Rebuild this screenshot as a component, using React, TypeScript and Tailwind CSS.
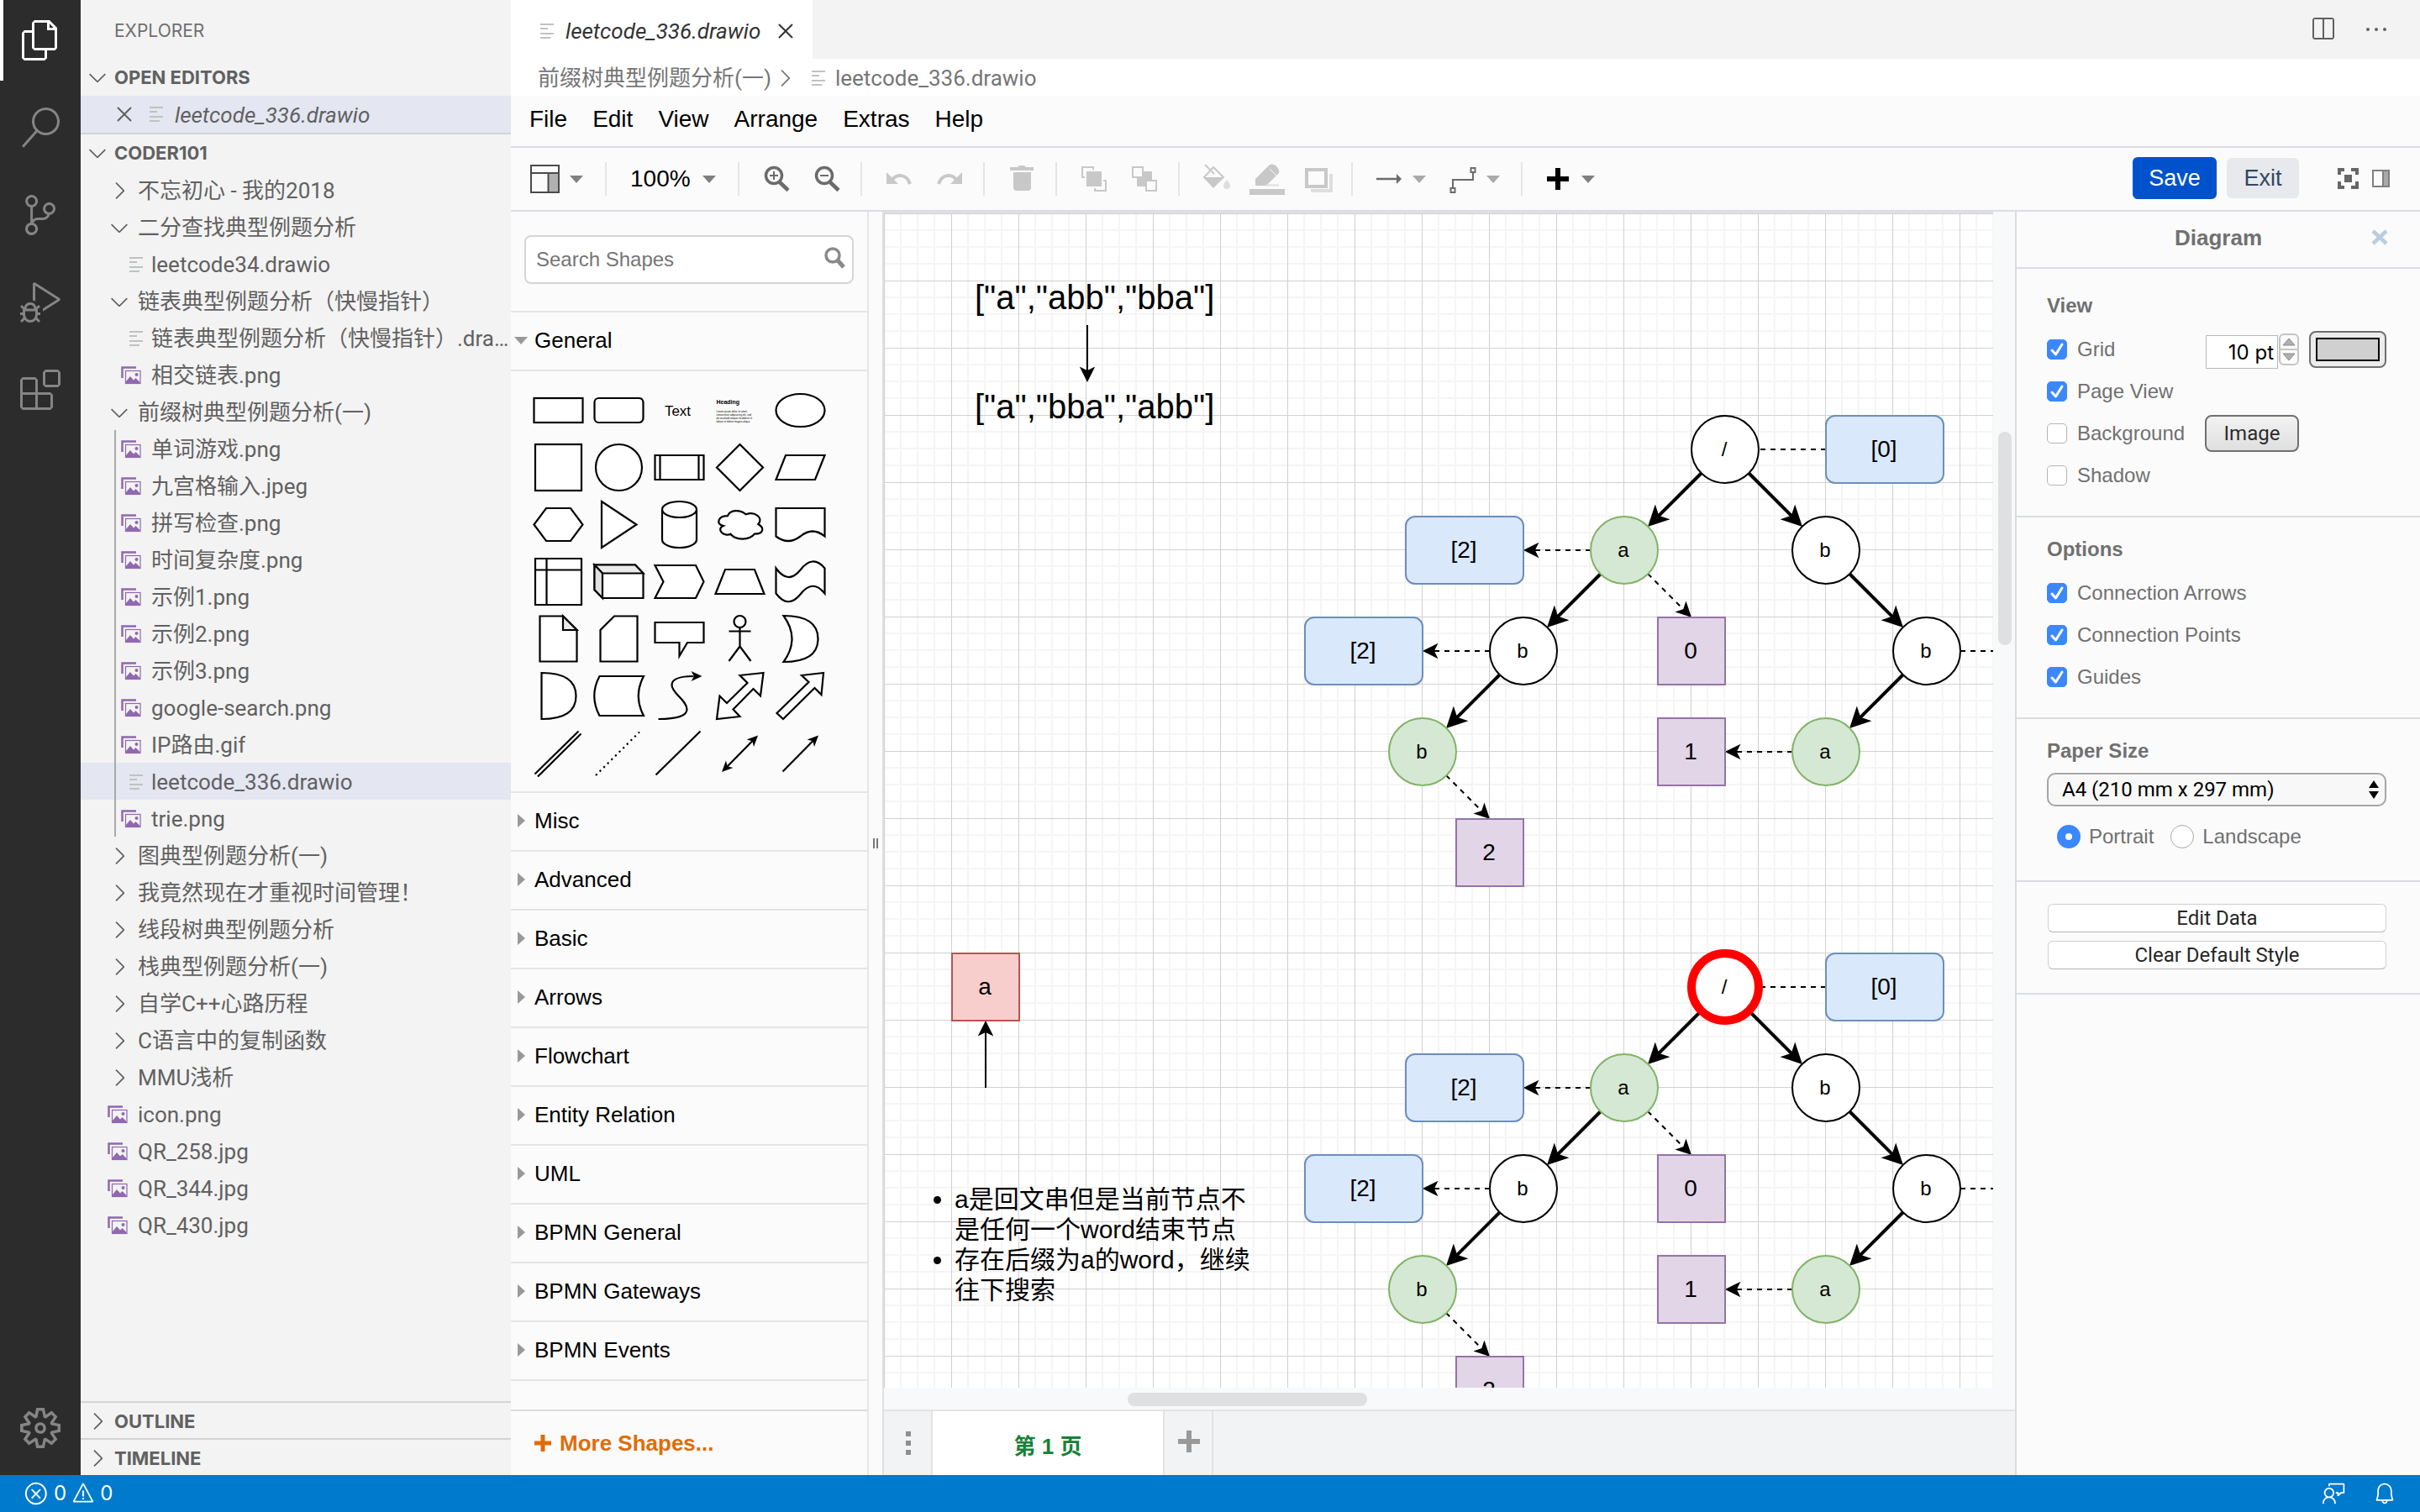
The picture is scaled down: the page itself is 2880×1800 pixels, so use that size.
import React from "react";
import {
  VscFiles,
  VscSearch,
  VscSourceControl,
  VscDebugAlt,
  VscExtensions,
  VscSettingsGear,
  VscSplitHorizontal,
  VscEllipsis,
  VscChevronRight,
  VscChevronDown,
  VscClose,
  VscError,
  VscWarning,
  VscBell,
  VscFeedback,
} from "react-icons/vsc";

const UI = "font-['Inter','Noto_Sans_CJK_SC',sans-serif]";
const NARROW = "font-['Roboto','Noto_Sans_CJK_SC',sans-serif]";
const HELV = "font-['Liberation_Sans','Noto_Sans_CJK_SC',sans-serif]";

/* ---------- small glyphs ---------- */

function LinesIcon() {
  return (
    <svg className="h-6 w-5 shrink-0" viewBox="0 0 20 24" fill="none" stroke="#bfc2c1" strokeWidth="2">
      <path d="M2 4h16M2 9h9M2 15h16M2 20h12" />
    </svg>
  );
}

function ImageFileIcon() {
  return (
    <svg className="h-6 w-6 shrink-0" viewBox="0 0 24 24" fill="none" stroke="#9068b0">
      <path d="M1.500 15V2.500H18" strokeWidth="2.500" />
      <rect x="5.500" y="6.500" width="17.500" height="15" strokeWidth="1.200" />
      <path d="M6 21v-2l5-6 4 4.500 2.500-2.500 5 5v1z" fill="#9068b0" stroke="none" />
      <circle cx="18.500" cy="11" r="2" fill="#9068b0" stroke="none" />
    </svg>
  );
}

function Caret({ tone = "#808080" }: { tone?: string }) {
  return (
    <svg className="h-4 w-5 shrink-0" viewBox="0 0 20 16">
      <path d="M2 4h16l-8 9z" fill={tone} />
    </svg>
  );
}

/* ---------- activity bar ---------- */

function ActivityBar() {
  const items = [
    { label: "Explorer", Icon: VscFiles, active: true },
    { label: "Search", Icon: VscSearch },
    { label: "Source Control", Icon: VscSourceControl },
    { label: "Run", Icon: VscDebugAlt },
    { label: "Extensions", Icon: VscExtensions },
  ];
  return (
    <nav className="flex w-24 shrink-0 flex-col justify-between bg-[#2c2c2c] text-[#858585]">
      <div className="flex flex-col gap-2">
        {items.map(({ label, Icon, active }) => (
          <button
            key={label}
            aria-label={label}
            className={
              active
                ? "flex h-24 items-center justify-center border-l-4 border-white pr-1 text-white"
                : "flex h-24 items-center justify-center"
            }
          >
            <Icon size={48} />
          </button>
        ))}
      </div>
      <button aria-label="Manage" className="mb-2 flex h-24 items-center justify-center">
        <VscSettingsGear size={48} />
      </button>
    </nav>
  );
}

/* ---------- explorer ---------- */

type Entry = { name: string; kind: "closed" | "open" | "img" | "doc"; sub?: boolean; guide?: boolean; selected?: boolean };

const entries: Entry[] = [
  { name: "不忘初心 - 我的2018", kind: "closed" },
  { name: "二分查找典型例题分析", kind: "open" },
  { name: "leetcode34.drawio", kind: "doc", sub: true },
  { name: "链表典型例题分析（快慢指针）", kind: "open" },
  { name: "链表典型例题分析（快慢指针）.drawio", kind: "doc", sub: true },
  { name: "相交链表.png", kind: "img", sub: true },
  { name: "前缀树典型例题分析(一)", kind: "open" },
  { name: "单词游戏.png", kind: "img", sub: true, guide: true },
  { name: "九宫格输入.jpeg", kind: "img", sub: true, guide: true },
  { name: "拼写检查.png", kind: "img", sub: true, guide: true },
  { name: "时间复杂度.png", kind: "img", sub: true, guide: true },
  { name: "示例1.png", kind: "img", sub: true, guide: true },
  { name: "示例2.png", kind: "img", sub: true, guide: true },
  { name: "示例3.png", kind: "img", sub: true, guide: true },
  { name: "google-search.png", kind: "img", sub: true, guide: true },
  { name: "IP路由.gif", kind: "img", sub: true, guide: true },
  { name: "leetcode_336.drawio", kind: "doc", sub: true, guide: true, selected: true },
  { name: "trie.png", kind: "img", sub: true, guide: true },
  { name: "图典型例题分析(一)", kind: "closed" },
  { name: "我竟然现在才重视时间管理！", kind: "closed" },
  { name: "线段树典型例题分析", kind: "closed" },
  { name: "栈典型例题分析(一)", kind: "closed" },
  { name: "自学C++心路历程", kind: "closed" },
  { name: "C语言中的复制函数", kind: "closed" },
  { name: "MMU浅析", kind: "closed" },
  { name: "icon.png", kind: "img" },
  { name: "QR_258.jpg", kind: "img" },
  { name: "QR_344.jpg", kind: "img" },
  { name: "QR_430.jpg", kind: "img" },
];

function TreeRow({ e }: { e: Entry }) {
  return (
    <li className={e.selected ? "flex h-11 items-center bg-[#e4e6f1]" : "flex h-11 items-center"}>
      <span className={e.guide ? "ml-10 h-full w-0.5 shrink-0 bg-[#a9a9a9]" : "ml-10 h-full w-0.5 shrink-0"} />
      {e.sub ? (
        <span className="flex w-[42px] shrink-0 items-center pl-1.5 pt-0.5">
          {e.kind === "img" ? <ImageFileIcon /> : <span className="ml-2 flex"><LinesIcon /></span>}
        </span>
      ) : e.kind === "img" ? (
        <span className="-ml-3 flex w-[38px] shrink-0 items-center pl-0.5 pt-0.5"><ImageFileIcon /></span>
      ) : (
        <span className="-ml-3 flex w-[38px] shrink-0 items-center pt-0.5">
          {e.kind === "open" ? <VscChevronDown size={32} /> : <VscChevronRight size={32} />}
        </span>
      )}
      <span className="truncate pt-0.5">{e.name}</span>
    </li>
  );
}

function SectionHeader({ title, open }: { title: string; open?: boolean }) {
  return (
    <button className={"flex h-11 w-full items-center gap-1 pl-1 text-left text-[22px] font-bold " + UI}>
      {open ? <VscChevronDown size={32} /> : <VscChevronRight size={32} />}
      {title}
    </button>
  );
}

function Explorer() {
  return (
    <aside className={"flex w-[512px] shrink-0 flex-col bg-[#f3f3f3] text-[26px] text-[#616161] " + NARROW}>
      <h2 className={"flex h-[70px] items-center pl-10 pt-1 text-[21px] text-[#6f6f6f] " + UI}>EXPLORER</h2>
      <SectionHeader title="OPEN EDITORS" open />
      <div className="flex h-11 items-center bg-[#e4e6f1] pl-9">
        <button aria-label="Close editor" className="mr-4 flex">
          <VscClose size={32} />
        </button>
        <span className="-ml-1 mr-3 flex"><LinesIcon /></span>
        <span className="pt-0.5 italic">leetcode_336.drawio</span>
      </div>
      <div className="h-0.5 bg-[#d4d4d4]" />
      <SectionHeader title="CODER101" open />
      <ul className="min-h-0 flex-1 overflow-hidden">
        {entries.map((e) => (
          <TreeRow key={e.name} e={e} />
        ))}
      </ul>
      <div className="h-11 border-t-2 border-[#d4d4d4]">
        <SectionHeader title="OUTLINE" />
      </div>
      <div className="h-11 border-t-2 border-[#d4d4d4]">
        <SectionHeader title="TIMELINE" />
      </div>
    </aside>
  );
}

/* ---------- tabs and breadcrumbs ---------- */

function TabBar() {
  return (
    <div className={"flex h-[70px] shrink-0 justify-between bg-[#f3f3f3] text-[26px] text-[#333333] " + NARROW}>
      <div className="flex items-center bg-white pl-[33px] pr-4 pt-1">
        <LinesIcon />
        <span className="ml-3 mr-3.5 italic">leetcode_336.drawio</span>
        <button aria-label="Close tab" className="flex">
          <VscClose size={32} />
        </button>
      </div>
      <div className="flex items-center gap-8 pr-9 text-[#616161]">
        <button aria-label="Split editor"><VscSplitHorizontal size={32} /></button>
        <button aria-label="More actions"><VscEllipsis size={32} /></button>
      </div>
    </div>
  );
}

function Breadcrumbs() {
  return (
    <div className={"flex h-11 shrink-0 items-center bg-white pl-8 pt-0.5 text-[26px] text-[#767676] " + NARROW}>
      <span>前缀树典型例题分析(一)</span>
      <VscChevronRight size={32} />
      <span className="ml-3.5 flex"><LinesIcon /></span>
      <span className="ml-2.5">leetcode_336.drawio</span>
    </div>
  );
}

/* ---------- menu and toolbar ---------- */

function MenuBar() {
  return (
    <div className="flex h-[62px] shrink-0 items-center gap-[30px] border-b-2 border-[#dadce0] bg-[#fbfbfb] pb-1 pl-[22px] text-[28px] text-black">
      {["File", "Edit", "View", "Arrange", "Extras", "Help"].map((m) => (
        <button key={m}>{m}</button>
      ))}
    </div>
  );
}

function Sep() {
  return <span className="h-10 w-0.5 shrink-0 bg-[#e5e5e5]" />;
}

function Tool({ label, children, tone }: { label: string; children: React.ReactNode; tone?: string }) {
  return (
    <button aria-label={label} className="flex w-[60px] items-center justify-center" style={{ color: tone ?? "#c8c8c8" }}>
      <svg className="h-12 w-12" viewBox="-24 -24 48 48" fill="none" stroke="currentColor">
        {children}
      </svg>
    </button>
  );
}

function Toolbar() {
  return (
    <div className="flex h-[76px] shrink-0 items-center border-b-2 border-[#dadce0] bg-[#fbfbfb] text-[28px]">
      <button aria-label="View" className="flex w-28 items-center gap-2.5 pl-[22px]">
        <svg className="h-10 w-9" viewBox="0 0 36 40" fill="none" stroke="#4a4a4a" strokeWidth="2">
          <rect x="2" y="4" width="33" height="32" fill="#fbfbfb" />
          <rect x="23" y="13" width="11" height="22" fill="#b0b0b0" stroke="none" />
          <path d="M2 13h33M22.500 13v23" />
        </svg>
        <Caret />
      </button>
      <Sep />
      <button className="flex w-36 items-center gap-3 pl-7">
        100%
        <Caret />
      </button>
      <span className="w-3" />
      <Sep />
      <div className="flex pl-3.5 pr-2.5">
        <Tool label="Zoom in" tone="#6b6b6b">
          <circle cx="-3" cy="-4" r="9.500" strokeWidth="3.500" />
          <path d="M4 4l10 9.500" strokeWidth="4.500" />
          <path d="M-8-4h10M-3-9v10" strokeWidth="2" />
        </Tool>
        <Tool label="Zoom out" tone="#6b6b6b">
          <circle cx="-3" cy="-4" r="9.500" strokeWidth="3.500" />
          <path d="M4 4l10 9.500" strokeWidth="4.500" />
          <path d="M-8-4h10" strokeWidth="2" />
        </Tool>
      </div>
      <Sep />
      <div className="flex pl-3.5 pr-2.5">
        <Tool label="Undo">
          <path d="M-9 2C-3-7 9-6 13 6" strokeWidth="4" />
          <path d="M-15-8v14h14z" fill="currentColor" stroke="none" />
        </Tool>
        <Tool label="Redo">
          <path d="M9 2C3-7-9-6-13 6" strokeWidth="4" />
          <path d="M15-8v14h-14z" fill="currentColor" stroke="none" />
        </Tool>
      </div>
      <Sep />
      <div className="flex pl-3.5 pr-2.5">
        <Tool label="Delete">
          <path d="M-14-14h9l2-2h6l2 2h9v4h-28zM-10-8h21v18q0 4-4 4h-13q-4 0-4-4z" fill="currentColor" stroke="none" />
        </Tool>
      </div>
      <Sep />
      <div className="flex pl-3.5 pr-2.5">
        <Tool label="To front">
          <rect x="-9" y="-9" width="18" height="18" fill="currentColor" stroke="none" />
          <path d="M-11-2h-3v-12h13v3M11 2h3v12h-13v-3" strokeWidth="2" />
        </Tool>
        <Tool label="To back">
          <rect x="-9" y="-9" width="18" height="18" fill="currentColor" stroke="none" />
          <rect x="-14" y="-14" width="12" height="12" fill="#fbfbfb" strokeWidth="2" />
          <rect x="2" y="2" width="12" height="12" fill="#fbfbfb" strokeWidth="2" />
        </Tool>
      </div>
      <Sep />
      <div className="flex pl-3.5 pr-2.5">
        <Tool label="Fill color">
          <path d="M-14-17L-3-6" strokeWidth="2" />
          <path d="M-4-14L8-2L-4 9L-15-2Z" strokeWidth="2" />
          <path d="M-15-2H8L-4 11Z" fill="currentColor" stroke="none" />
          <path d="M12 1q4 5 4 7a4 4 0 0 1-8 0q0-2 4-7z" fill="#dedede" stroke="none" />
        </Tool>
        <Tool label="Line color">
          <path d="M-14 8v-8l17-17q5-2 9 3t1 8l-14 14z" fill="currentColor" stroke="none" />
          <path d="M3-12l8 8" stroke="#fbfbfb" strokeWidth="1" />
          <path d="M-2 7.500h16" stroke="#dedede" strokeWidth="2" />
          <path d="M-21 15.500h42" strokeWidth="7" />
        </Tool>
        <Tool label="Shadow">
          <path d="M-8 14h24v-20" stroke="#dedede" strokeWidth="4" />
          <rect x="-13" y="-11" width="23" height="20" strokeWidth="4" />
        </Tool>
      </div>
      <Sep />
      <div className="flex px-3">
        <button aria-label="Connection" className="flex w-[88px] items-center justify-center gap-2.5 pl-1">
          <svg className="h-10 w-8" viewBox="0 0 32 40">
            <path d="M1 20h26" stroke="#6b6b6b" strokeWidth="2.500" />
            <path d="M25 14l6 6-6 6z" fill="#6b6b6b" />
          </svg>
          <Caret tone="#a9a9a9" />
        </button>
        <button aria-label="Waypoints" className="flex w-[88px] items-center justify-center gap-2.5 pl-1">
          <svg className="h-10 w-8" viewBox="0 0 32 40" fill="none" stroke="#6b6b6b" strokeWidth="2">
            <path d="M4 31V21H28V12" />
            <rect x="1.500" y="31" width="5" height="5" />
            <rect x="25.500" y="7" width="5" height="5" />
          </svg>
          <Caret tone="#a9a9a9" />
        </button>
      </div>
      <Sep />
      <button aria-label="Insert" className="flex w-28 items-center gap-3 pl-7">
        <svg className="h-7 w-7" viewBox="0 0 28 28">
          <path d="M14 1v26M1 14h26" stroke="#000" strokeWidth="6" />
        </svg>
        <Caret />
      </button>
      <div className="ml-auto flex items-center pb-0.5 pr-[34px]">
        <button className="mr-3 h-[50px] w-[100px] rounded-md bg-[#0052cc] text-[27px] text-white">Save</button>
        <button className="mr-11 h-12 w-[86px] rounded-md bg-[#e7e9ed] text-[27px] text-[#344563]">Exit</button>
        <button aria-label="Fullscreen" className="mr-3.5">
          <svg className="h-7 w-7" viewBox="0 0 28 28" fill="none" stroke="#666" strokeWidth="4">
            <path d="M4 10V4H10M18 4H25V10M25 18V25H18M10 25H4V18" />
            <rect x="10" y="10" width="9" height="9" fill="#666" stroke="none" />
          </svg>
        </button>
        <button aria-label="Format panel">
          <svg className="h-6 w-6" viewBox="0 0 24 24" fill="none" stroke="#808080" strokeWidth="2">
            <rect x="2" y="3" width="19" height="19" fill="#fbfbfb" />
            <rect x="14" y="3" width="7" height="19" fill="#a9a9a9" />
          </svg>
        </button>
      </div>
    </div>
  );
}

/* ---------- shapes sidebar ---------- */

const head = (x: number, y: number, a: number) => (
  <path d="M0 0L-13 6L-9.500 0L-13-6Z" fill="#000" stroke="none" transform={`translate(${x} ${y}) rotate(${a})`} />
);

const shapes: { label: string; art: React.ReactNode }[] = [
  { label: "Rectangle", art: <rect x="-29" y="-14.500" width="58" height="29" /> },
  { label: "Rounded Rectangle", art: <rect x="-29" y="-14.500" width="58" height="29" rx="5" /> },
  {
    label: "Text",
    art: (
      <text x="-2" y="6" textAnchor="middle" fontSize="17" fill="#000" stroke="none">
        Text
      </text>
    ),
  },
  {
    label: "Textbox",
    art: (
      <g fill="#000" stroke="none" fontSize="3">
        <text x="-28" y="-8" fontSize="7" fontWeight="bold">Heading</text>
        <text x="-28" y="2">Lorem ipsum dolor sit amet,</text>
        <text x="-28" y="6">consectetur adipisicing elit, sed</text>
        <text x="-28" y="10">do eiusmod tempor incididunt ut</text>
        <text x="-28" y="14">labore et dolore magna aliqua.</text>
      </g>
    ),
  },
  { label: "Ellipse", art: <ellipse rx="29" ry="19.500" /> },
  { label: "Square", art: <rect x="-27.500" y="-27.500" width="55" height="55" /> },
  { label: "Circle", art: <circle r="27.500" /> },
  { label: "Process", art: <path d="M-29-14.500h58v29h-58zM-23-14.500v29M23-14.500v29" /> },
  { label: "Diamond", art: <path d="M0-27.500L27.500 0L0 27.500L-27.500 0Z" /> },
  { label: "Parallelogram", art: <path d="M-17.500-14.500H29L17.500 14.500H-29Z" /> },
  { label: "Hexagon", art: <path d="M-14.500-19.500H14.500L29 0L14.500 19.500H-14.500L-29 0Z" /> },
  { label: "Triangle", art: <path d="M-20.500-27.500L21 0L-20.500 27.500Z" /> },
  {
    label: "Cylinder",
    art: <path d="M-20.500-18A20.500 9.500 0 0 1 20.500-18V18A20.500 9.500 0 0 1-20.500 18ZM-20.500-18A20.500 9.500 0 0 0 20.500-18" />,
  },
  {
    label: "Cloud",
    art: (
      <path
        transform="translate(-29 -20)"
        d="M14.500 9.700C2.900 9.700 0 19.500 9.300 21.500C0 25.700 10.400 35.100 18 31.200C23.200 39 40.600 39 46.400 31.200C58 31.200 58 23.400 50.800 19.500C58 11.700 46.400 3.900 36.300 7.800C29 2 17.400 2 14.500 9.700Z"
      />
    ),
  },
  { label: "Document", art: <path d="M-29-19.500H29V14Q14.500 2 0 14Q-14.500 25-29 14Z" /> },
  { label: "Internal Storage", art: <path d="M-27.500-27.500h55v55h-55zM-14-27.500v55M-27.500-14h55" /> },
  {
    label: "Cube",
    art: (
      <>
        <path d="M-29-20H19.500L29-10V19.500H-19.500L-29 9.500Z" />
        <path d="M-29-20H19.500L29-10H-19.500Z" fill="#ebebeb" />
        <path d="M-29-20L-19.500-10V19.500L-29 9.500Z" fill="#e0e0e0" />
      </>
    ),
  },
  { label: "Step", art: <path d="M-29-19.500H19.500L29 0L19.500 19.500H-29L-19 0Z" /> },
  { label: "Trapezoid", art: <path d="M-17.500-14.500H17.500L29 14.500H-29Z" /> },
  { label: "Tape", art: <path d="M-29-16Q-14.500 4 0-14Q14.500-33 29-16V14Q14.500-4 0 15Q-14.500 33-29 14Z" /> },
  {
    label: "Note",
    art: (
      <>
        <path d="M-22-27H5.500L22-10.500V27H-22Z" />
        <path d="M5.500-27V-10.500H22Z" fill="#e8e8e8" />
      </>
    ),
  },
  { label: "Card", art: <path d="M-5.500-27H22V27H-22V-10.500Z" /> },
  { label: "Callout", art: <path d="M-29-19.500H29V4.500H9.500L0 20.500V4.500H-29Z" /> },
  {
    label: "Actor",
    art: (
      <>
        <circle cy="-20.500" r="7" />
        <path d="M0-13.500V9M-13-9H13M0 9L-13 26.500M0 9L13 26.500" fill="none" />
      </>
    ),
  },
  { label: "Or", art: <path d="M-20-27.500Q21-27.500 21 0Q21 27.500-20 27.500Q0 0-20-27.500Z" /> },
  { label: "And", art: <path d="M-20-27.500Q21-27.500 21 0Q21 27.500-20 27.500Z" /> },
  { label: "Data Storage", art: <path d="M-23-23.500H29.500Q17 0 29.500 23.500H-23Q-35.500 0-23-23.500Z" /> },
  {
    label: "Curve",
    art: (
      <>
        <path d="M-25 27.500Q9 27.500 9 16C9 5-9-3-9-13Q-9-23.500 17-23.500" fill="none" />
        {head(27, -23.5, 0)}
      </>
    ),
  },
  {
    label: "Bidirectional Arrow",
    art: <path d="M28-27.500L0-24.500L9-15.500L-15.500 8.500L-24 0L-27.500 27.500L0 24.500L-8 16L16-8.500L24.500 0Z" />,
  },
  { label: "Arrow", art: <path d="M27.500-27.500L1.500-24.500L10-16.500L-28 20.500L-20.500 27.500L17-9.500L25-1.500Z" /> },
  { label: "Link", art: <path d="M-28 25L24-26M-24.500 28L27-23" /> },
  { label: "Dotted Line", art: <path d="M-27.500 26.500L24.500-25" strokeDasharray="2.200 4.300" /> },
  { label: "Line", art: <path d="M-28 26L25-26" /> },
  {
    label: "Bidirectional Connector",
    art: (
      <>
        <path d="M-15 16L15-14.500" />
        {head(21.5, -21, -45)}
        {head(-21.5, 22.5, 135)}
      </>
    ),
  },
  {
    label: "Directional Connector",
    art: (
      <>
        <path d="M-21 22L15-14.500" />
        {head(21.5, -21, -45)}
      </>
    ),
  },
];

function ShapesPanel() {
  const sections = ["Misc", "Advanced", "Basic", "Arrows", "Flowchart", "Entity Relation", "UML", "BPMN General", "BPMN Gateways", "BPMN Events"];
  return (
    <div className="flex w-[426px] shrink-0 flex-col border-r-2 border-[#e5e5e5] bg-[#fbfbfb] text-[26px] text-black">
      <div className="border-b-2 border-[#e5e5e5] px-4 pb-8 pt-7">
        <div className="relative flex">
          <input
            aria-label="Search Shapes"
            placeholder="Search Shapes"
            className="h-[58px] w-full rounded-lg border-2 border-[#d5d5d5] bg-white px-3 text-[24px] placeholder:text-[#757575]"
          />
          <svg className="absolute right-1.5 top-3 h-8 w-8" viewBox="0 0 32 32" fill="none" stroke="#8a8a8a">
            <circle cx="13" cy="12" r="8" strokeWidth="3.500" />
            <path d="M19 18l7 8" strokeWidth="5" />
          </svg>
        </div>
      </div>
      <div className="min-h-0 flex-1 overflow-hidden">
        <button className="flex h-[70px] w-full items-center border-b-2 border-[#e5e5e5] pb-0.5">
          <svg className="mr-2 h-5 w-5" viewBox="0 0 20 20"><path d="M4 6h16l-8 9z" fill="#999" /></svg>
          General
        </button>
        <div className="grid grid-cols-[repeat(5,72px)] border-b-2 border-[#e5e5e5] py-3 pl-5">
          {shapes.map((s) => (
            <button key={s.label} aria-label={s.label} className="h-[68px] w-[72px]">
              <svg className="h-full w-full" viewBox="-36.500 -34.500 72 68" fill="#fff" stroke="#000" strokeWidth="2.200">
                {s.art}
              </svg>
            </button>
          ))}
        </div>
        {sections.map((s) => (
          <button key={s} className="flex h-[70px] w-full items-center border-b-2 border-[#e5e5e5] pb-0.5">
            <svg className="mr-2 h-5 w-5" viewBox="0 0 20 20"><path d="M8 2v16l9-8z" fill="#999" /></svg>
            {s}
          </button>
        ))}
      </div>
      <button className="flex h-[78px] items-center gap-2.5 border-t-2 border-[#dadce0] pl-7 font-bold text-[#e06c0a]">
        <svg className="h-5 w-5" viewBox="0 0 20 20"><path d="M10 0v20M0 10h20" stroke="currentColor" strokeWidth="5" /></svg>
        More Shapes...
      </button>
    </div>
  );
}

/* ---------- diagram ---------- */

type Pt = [number, number];

function Edge({ from, to, thick, dashed, plain }: { from: Pt; to: Pt; thick?: boolean; dashed?: boolean; plain?: boolean }) {
  const sw = thick ? 4 : 2;
  const size = thick ? 16 : 14;
  const dx = to[0] - from[0];
  const dy = to[1] - from[1];
  const len = Math.hypot(dx, dy);
  const angle = (Math.atan2(dy, dx) * 180) / Math.PI;
  const tip = len - sw * 1.118;
  return (
    <g transform={`translate(${from[0]} ${from[1]}) rotate(${angle})`} stroke="#000" strokeWidth={sw}>
      <path d={`M0 0H${plain ? len : tip - size * 0.75}`} strokeDasharray={dashed ? "6 6" : undefined} />
      {!plain && (
        <path d={`M${tip} 0L${tip - size} ${size / 2}L${tip - size * 0.75} 0L${tip - size} ${-size / 2}Z`} fill="#000" />
      )}
    </g>
  );
}

/* Edges leaving or entering a circle of radius 40 on the diagonal are 28 px from its centre. */
function TreeEdges({ dy }: { dy: number }) {
  return (
    <g transform={`translate(0 ${dy})`}>
      <Edge from={[1120, 280]} to={[1040, 280]} dashed plain />
      <Edge from={[972, 308]} to={[908, 372]} thick />
      <Edge from={[1028, 308]} to={[1092, 372]} thick />
      <Edge from={[852, 428]} to={[788, 492]} thick />
      <Edge from={[732, 548]} to={[668, 612]} thick />
      <Edge from={[1148, 428]} to={[1212, 492]} thick />
      <Edge from={[1212, 548]} to={[1148, 612]} thick />
      <Edge from={[840, 400]} to={[760, 400]} dashed />
      <Edge from={[720, 520]} to={[640, 520]} dashed />
      <Edge from={[908, 428]} to={[960, 480]} dashed />
      <Edge from={[668, 668]} to={[720, 720]} dashed />
      <Edge from={[1080, 640]} to={[1000, 640]} dashed />
      <Edge from={[1280, 520]} to={[1340, 520]} dashed plain />
    </g>
  );
}

const center = "absolute flex items-center justify-center pr-0.5 ";
const white = center + "h-[82px] w-[82px] rounded-full border-2 border-black bg-white text-2xl";
const green = center + "h-[82px] w-[82px] rounded-full border-2 border-[#82b366] bg-[#d5e8d4] text-2xl";
const blue = center + "h-[82px] w-[142px] rounded-xl border-2 border-[#6c8ebf] bg-[#dae8fc]";
const purple = center + "h-[82px] w-[82px] border-2 border-[#9673a6] bg-[#e1d5e7]";

function TreeNodes() {
  return (
    <>
      <div className={blue + " left-[1120px] top-[240px]"}>[0]</div>
      <div className={green + " left-[840px] top-[360px]"}>a</div>
      <div className={white + " left-[1080px] top-[360px]"}>b</div>
      <div className={blue + " left-[620px] top-[360px]"}>[2]</div>
      <div className={white + " left-[720px] top-[480px]"}>b</div>
      <div className={blue + " left-[500px] top-[480px]"}>[2]</div>
      <div className={purple + " left-[920px] top-[480px]"}>0</div>
      <div className={white + " left-[1200px] top-[480px]"}>b</div>
      <div className={green + " left-[600px] top-[600px]"}>b</div>
      <div className={purple + " left-[920px] top-[600px]"}>1</div>
      <div className={green + " left-[1080px] top-[600px]"}>a</div>
      <div className={purple + " left-[680px] top-[720px]"}>2</div>
    </>
  );
}

function Canvas() {
  return (
    <div className="relative min-h-0 min-w-0 flex-1 overflow-hidden bg-white text-[28px] text-black">
      <svg className="absolute left-0 top-0 h-full w-full" fill="none">
        <defs>
          <pattern id="grid" width="80" height="80" patternUnits="userSpaceOnUse">
            <path d="M20 0V80M40 0V80M60 0V80M0 20H80M0 40H80M0 60H80" stroke="#f5f5f5" strokeWidth="2" />
            <path d="M0.500 0V80M0 0.500H80" stroke="#d0d0d0" strokeWidth="1" />
          </pattern>
        </defs>
        <rect width="100%" height="100%" fill="url(#grid)" />
        <g transform="translate(1 1)">
          <TreeEdges dy={0} />
          <TreeEdges dy={640} />
          <Edge from={[241, 132]} to={[241, 200]} />
          <Edge from={[120, 1040]} to={[120, 960]} />
        </g>
      </svg>
      <div className="absolute left-[108px] top-[76px] text-[40px] leading-[48px]">["a","abb","bba"]</div>
      <div className="absolute left-[108px] top-[206px] text-[40px] leading-[48px]">["a","bba","abb"]</div>
      <div className="absolute left-0 top-0">
        <div className={white + " left-[960px] top-[240px]"}>/</div>
        <TreeNodes />
      </div>
      <div className="absolute left-0 top-[640px]">
        <div className="absolute left-[956px] top-[236px] flex h-[90px] w-[90px] items-center justify-center rounded-full border-[10px] border-[#ff0000] bg-white pr-0.5 text-2xl">
          /
        </div>
        <TreeNodes />
      </div>
      <div className="absolute left-[80px] top-[880px] flex h-[82px] w-[82px] items-center justify-center border-2 border-[#b85450] bg-[#f8cecc] pr-0.5">a</div>
      <ul className="absolute left-[84px] top-[1156px] w-[360px] list-disc text-[30px] leading-9">
        <li>a是回文串但是当前节点不是任何一个word结束节点</li>
        <li>存在后缀为a的word，继续往下搜索</li>
      </ul>
    </div>
  );
}

function CanvasArea() {
  return (
    <div className="flex min-w-0 flex-1 flex-col border-l-2 border-[#e0e0e0]">
      <div className="flex min-h-0 flex-1 bg-[#f8f9fb]">
        <div className="flex min-w-0 flex-1 border-t-2 border-[#e0e0e0]">
          <Canvas />
        </div>
        <div className="flex w-[26px] shrink-0 justify-end pr-1 pt-[262px]">
          <span className="h-[254px] w-4 rounded-full bg-[#dfe0e2]" />
        </div>
      </div>
      <div className="h-[26px] shrink-0 bg-[#f8f9fb] pl-[290px] pt-1.5">
        <div className="h-4 w-[285px] rounded-full bg-[#dfe0e2]" />
      </div>
      <div className="flex h-[78px] shrink-0 border-t-2 border-[#e3e3e3] bg-[#f1f3f4]">
        <button aria-label="Pages" className="flex w-[58px] items-center justify-center border-r-2 border-[#e3e3e3] pl-0.5">
          <svg className="h-9 w-3" viewBox="0 0 12 36" fill="#8f8f8f">
            <path d="M3 4h6v6H3zM3 15h6v6H3zM3 26h6v6H3z" />
          </svg>
        </button>
        <button className="w-[276px] border-r-2 border-[#e3e3e3] bg-white pt-2 text-[26px] font-bold text-[#188038]">第 1 页</button>
        <button aria-label="Insert page" className="flex w-[58px] items-center justify-center border-r-2 border-[#e3e3e3] pb-1 pl-0.5">
          <svg className="h-7 w-7" viewBox="0 0 28 28">
            <path d="M14 1v26M1 14h26" stroke="#999" strokeWidth="6" />
          </svg>
        </button>
      </div>
    </div>
  );
}

/* ---------- format panel ---------- */

function Check({ label, checked }: { label: string; checked?: boolean }) {
  return (
    <label className="flex items-center gap-3">
      <span className="relative flex">
        <input
          type="checkbox"
          defaultChecked={checked}
          className="h-6 w-6 appearance-none rounded-[5px] border border-[#b5b5b5] bg-white checked:border-[#3b88fd] checked:bg-[#3b88fd]"
        />
        {checked && (
          <svg className="pointer-events-none absolute left-0 top-0 h-6 w-6" viewBox="0 0 24 24" fill="none" stroke="#fff" strokeWidth="3">
            <path d="M6 13l4.500 5L18 6" strokeLinecap="round" strokeLinejoin="round" />
          </svg>
        )}
      </span>
      {label}
    </label>
  );
}

function Radio({ label, checked }: { label: string; checked?: boolean }) {
  return (
    <label className="flex items-center gap-2.5">
      <input
        type="radio"
        name="orientation"
        defaultChecked={checked}
        className="h-7 w-7 appearance-none rounded-full border border-[#a8a8a8] bg-white checked:border-[10px] checked:border-[#3b88fd]"
      />
      {label}
    </label>
  );
}

function FormatPanel() {
  return (
    <aside className="flex w-[482px] shrink-0 flex-col border-l-2 border-[#dadce0] bg-[#fbfbfb] text-[24px] text-[#707070]">
      <header className="relative flex h-[68px] items-center justify-center border-b-2 border-[#dadce0] pb-1 text-[26px] font-bold">
        Diagram
        <button aria-label="Close panel" className="absolute right-[38px] top-5">
          <svg className="h-5 w-5" viewBox="0 0 20 20">
            <path d="M2 3l16 15M18 3L2 18" stroke="#bccde0" strokeWidth="4.500" />
          </svg>
        </button>
      </header>
      <section className="flex h-[296px] flex-col border-b-2 border-[#dadce0] pl-9 pr-10 pt-7">
        <h3 className="mb-[11px] leading-8 font-bold">View</h3>
        <div className="flex h-[50px] items-center">
          <Check label="Grid" checked />
          <div className="ml-auto flex items-center">
            <input
              aria-label="Grid size"
              defaultValue="10 pt"
              className={"mt-1.5 h-10 w-[86px] border border-[#b8b8b8] bg-white pr-1 text-right text-[24px] text-black " + UI}
            />
            <span className="ml-px mr-3 flex h-[38px] w-6 flex-col rounded-md border-2 border-[#c4c4c4]">
              <button aria-label="Increase" className="flex flex-1 items-center justify-center border-b border-[#c4c4c4]">
                <svg className="h-2.5 w-4" viewBox="0 0 16 10"><path d="M1 9h14L8 1z" fill="#b0b0b0" stroke="#8a8a8a" /></svg>
              </button>
              <button aria-label="Decrease" className="flex flex-1 items-center justify-center border-t border-[#c4c4c4]">
                <svg className="h-2.5 w-4" viewBox="0 0 16 10"><path d="M1 1h14L8 9z" fill="#b0b0b0" stroke="#8a8a8a" /></svg>
              </button>
            </span>
            <button aria-label="Grid color" className="h-11 w-[92px] rounded-lg border-2 border-[#707070] bg-[#ececec] p-1.5">
              <span className="block h-full w-full border-2 border-black bg-[#d0d0d0]" />
            </button>
          </div>
        </div>
        <div className="flex h-[50px] items-center">
          <Check label="Page View" checked />
        </div>
        <div className="flex h-[50px] items-center justify-between pr-[104px]">
          <Check label="Background" />
          <button className={"h-11 w-28 rounded-lg border-2 border-[#707070] bg-linear-to-b from-[#f2f2f2] to-[#dfdfdf] text-[24px] text-[#2b2b2b] " + NARROW}>
            Image
          </button>
        </div>
        <div className="flex h-[50px] items-center">
          <Check label="Shadow" />
        </div>
      </section>
      <section className="flex h-[240px] flex-col border-b-2 border-[#dadce0] pl-9 pt-[22px]">
        <h3 className="mb-[11px] leading-8 font-bold">Options</h3>
        {["Connection Arrows", "Connection Points", "Guides"].map((o) => (
          <div key={o} className="flex h-[50px] items-center">
            <Check label={o} checked />
          </div>
        ))}
      </section>
      <section className="flex h-[194px] flex-col border-b-2 border-[#dadce0] pl-9 pr-10 pt-[22px]">
        <h3 className="leading-8 font-bold">Paper Size</h3>
        <div className="relative mt-2.5 flex">
          <select
            aria-label="Paper Size"
            className={"h-10 w-full appearance-none rounded-[10px] border-2 border-[#a6a6a6] bg-[#f8f8f8] pl-4 text-[24px] text-black " + NARROW}
          >
            <option>A4 (210 mm x 297 mm)</option>
          </select>
          <svg className="pointer-events-none absolute right-2 top-2 h-6 w-3.5" viewBox="0 0 14 24">
            <path d="M1 10L7 1l6 9zM1 14h12l-6 9z" fill="#000" />
          </svg>
        </div>
        <div className="mt-[18px] flex items-center gap-5 pl-3">
          <Radio label="Portrait" checked />
          <Radio label="Landscape" />
        </div>
      </section>
      <section className={"flex flex-col gap-2.5 border-b-2 border-[#dadce0] pb-7 pl-[37px] pr-10 pt-[26px] text-[#262626] " + NARROW}>
        <button className="h-[34px] rounded-md border border-[#cfcfcf] border-b-[#b5b5b5] bg-white leading-8">Edit Data</button>
        <button className="h-[34px] rounded-md border border-[#cfcfcf] border-b-[#b5b5b5] bg-white leading-8">Clear Default Style</button>
      </section>
    </aside>
  );
}

/* ---------- page ---------- */

function StatusBar() {
  return (
    <footer className="flex h-11 shrink-0 items-center justify-between bg-[#007acc] px-7 text-[24px] text-white">
      <button className="flex items-center">
        <VscError size={30} />
        <span className="ml-1.5 mr-1.5">0</span>
        <VscWarning size={28} />
        <span className="ml-1.5">0</span>
      </button>
      <div className="flex items-center gap-8">
        <VscFeedback size={28} />
        <VscBell size={28} />
      </div>
    </footer>
  );
}

export default function App() {
  return (
    <div className={"flex h-screen flex-col overflow-hidden " + UI}>
      <div className="flex min-h-0 flex-1">
        <ActivityBar />
        <Explorer />
        <main className="flex min-w-0 flex-1 flex-col">
          <TabBar />
          <Breadcrumbs />
          <div className={"flex min-h-0 flex-1 flex-col " + HELV}>
            <MenuBar />
            <Toolbar />
            <div className="flex min-h-0 flex-1">
              <ShapesPanel />
              <div className="flex w-4 shrink-0 items-center justify-center bg-[#fbfbfb]">
                <svg className="h-3 w-2" viewBox="0 0 8 12" stroke="#777" strokeWidth="2"><path d="M2 0v12M6 0v12" /></svg>
              </div>
              <CanvasArea />
              <FormatPanel />
            </div>
          </div>
        </main>
      </div>
      <StatusBar />
    </div>
  );
}
